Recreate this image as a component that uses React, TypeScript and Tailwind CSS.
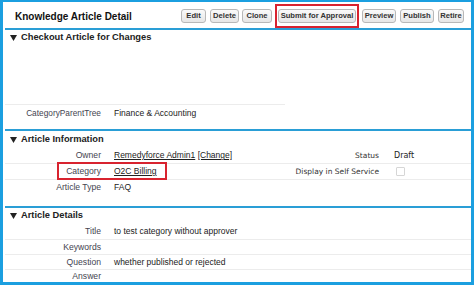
const Tri = () => (
  <svg width="7" height="6" viewBox="0 0 7 6" className="shrink-0">
    <polygon points="0,0 7,0 3.5,6" fill="#222" />
  </svg>
)

const SectionHead = ({ title, h }: { title: string; h: string }) => (
  <div className={`flex items-center gap-[4px] pl-[7px] ${h}`}>
    <Tri />
    <span className="text-[9.3px] font-bold text-[#222]">{title}</span>
  </div>
)

const BlueLine = () => <div className="ml-[2px] h-[2px] shrink-0 bg-[#2a9ed6]" />

const Btn = ({ label, w }: { label: string; w: string }) => (
  <div
    className={`flex h-[14px] items-center justify-center rounded-[3px] border border-[#b8b8b8] bg-gradient-to-b from-[#fafafa] to-[#e6e6e6] text-[7.6px] font-bold text-[#333] ${w}`}
  >
    {label}
  </div>
)

const Row = ({
  label,
  value,
  h,
  last,
}: {
  label: string
  value?: React.ReactNode
  h: string
  last?: boolean
}) => (
  <div
    className={`ml-[2px] flex items-center ${h} ${last ? '' : 'border-b border-[#ececec]'}`}
  >
    <div className="w-[96px] text-right text-[8.6px] text-[#444450]">{label}</div>
    <div className="pl-[13px] text-[8.5px] text-[#222]">{value}</div>
  </div>
)

export default function App() {
  return (
    <div className="relative flex h-[285px] w-[474px] flex-col overflow-hidden border-t-2 border-b-[3px] border-l-[3px] border-r-[3px] border-[#1b9fe0] bg-white font-['Liberation_Sans',Arial,sans-serif]">
      {/* header */}
      <div className="flex h-[26px] shrink-0 items-center justify-between pt-[2px] pl-[12px] pr-[7px]">
        <span className="text-[10px] font-bold text-[#111]">Knowledge Article Detail</span>
        <div className="flex items-center">
          <Btn label="Edit" w="w-[25px]" />
          <div className="w-[4px]" />
          <Btn label="Delete" w="w-[29px]" />
          <div className="w-[3px]" />
          <Btn label="Clone" w="w-[30px]" />
          <div className="w-[3px]" />
          <div className="flex h-[24px] items-center border-2 border-[#d8232f] px-[1px]">
            <Btn label="Submit for Approval" w="w-[78px]" />
          </div>
          <div className="w-[3px]" />
          <Btn label="Preview" w="w-[34px]" />
          <div className="w-[4px]" />
          <Btn label="Publish" w="w-[34px]" />
          <div className="w-[4px]" />
          <Btn label="Retire" w="w-[26px]" />
        </div>
      </div>
      <BlueLine />

      {/* checkout section */}
      <SectionHead title="Checkout Article for Changes" h="h-[16px]" />
      <div className="h-[58px] shrink-0" />
      <div className="ml-[2px] flex h-[17px] w-[280px] shrink-0 items-center border-t border-[#ececec]">
        <div className="w-[96px] text-right text-[8.3px] text-[#444450]">CategoryParentTree</div>
        <div className="pl-[13px] text-[8.5px] text-[#222]">Finance &amp; Accounting</div>
      </div>
      <div className="h-[8px] shrink-0" />
      <BlueLine />

      {/* article information */}
      <SectionHead title="Article Information" h="h-[17px]" />
      <div className="relative ml-[2px] flex flex-col">
        <div className="flex h-[16px] items-center border-b border-[#ececec]">
          <div className="w-[96px] text-right text-[8.6px] text-[#444450]">Owner</div>
          <div className="w-[137px] pl-[13px] text-[8.5px] text-[#222]">
            <span className="underline">Remedyforce Admin1</span>{' '}
            <span className="underline">[Change]</span>
          </div>
          <div className="w-[141px] text-right font-['DejaVu_Sans',sans-serif] text-[7.5px] text-[#333]">
            Status
          </div>
          <div className="pl-[15px] font-['DejaVu_Sans',sans-serif] text-[8px] text-[#222]">Draft</div>
        </div>
        <div className="flex h-[16px] items-center border-b border-[#ececec]">
          <div className="w-[96px] text-right text-[8.6px] text-[#444450]">Category</div>
          <div className="w-[137px] pl-[13px] text-[8.5px] text-[#222]">
            <span className="underline">O2C Billing</span>
          </div>
          <div className="w-[141px] text-right font-['DejaVu_Sans',sans-serif] text-[7.5px] text-[#333]">
            Display in Self Service
          </div>
          <div className="pl-[17px]">
            <div className="h-[9px] w-[9px] rounded-[1px] border border-[#d6d6d6] bg-white" />
          </div>
        </div>
        <div className="flex h-[15px] items-center">
          <div className="w-[96px] text-right text-[8.6px] text-[#444450]">Article Type</div>
          <div className="pl-[13px] text-[8.5px] text-[#222]">FAQ</div>
        </div>
        <div className="pointer-events-none absolute left-[52px] top-[14px] h-[18px] w-[110px] border-2 border-[#d8232f]" />
      </div>
      <div className="h-[11px] shrink-0" />
      <BlueLine />

      {/* article details */}
      <SectionHead title="Article Details" h="h-[15px]" />
      <Row label="Title" value="to test category without approver" h="h-[17px]" />
      <Row label="Keywords" h="h-[15px]" />
      <Row label="Question" value="whether published or rejected" h="h-[15px]" />
      <Row label="Answer" h="h-[12px]" last />
    </div>
  )
}
